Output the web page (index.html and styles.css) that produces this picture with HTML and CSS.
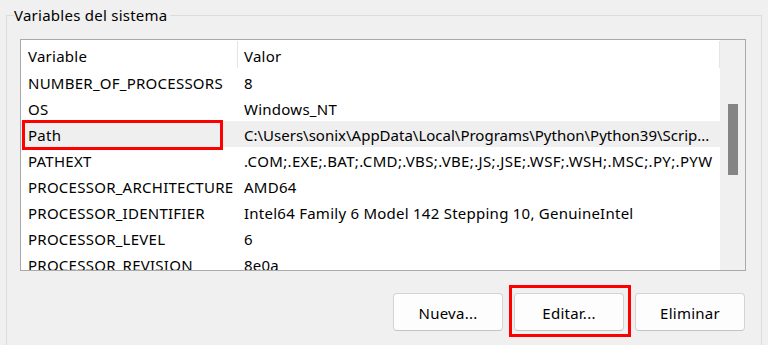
FILE: index.html
```html
<!DOCTYPE html>
<html lang="es">
<head>
<meta charset="utf-8">
<title>Variables del sistema</title>
<link rel="stylesheet" href="styles.css">
</head>
<body>
<fieldset class="group">
  <legend class="group-title">Variables del sistema</legend>
  <div class="listview">
    <div class="list-body">
      <div class="row header">
        <div class="cell c1">Variable</div>
        <div class="cell c2 hdr2">Valor</div>
      </div>
      <div class="row"><div class="cell c1">NUMBER_OF_PROCESSORS</div><div class="cell c2">8</div></div>
      <div class="row"><div class="cell c1">OS</div><div class="cell c2">Windows_NT</div></div>
      <div class="row selected"><div class="cell c1">Path</div><div class="cell c2 tight">C:\Users\sonix\AppData\Local\Programs\Python\Python39\Scrip...</div><span class="mark mark-path"></span></div>
      <div class="row"><div class="cell c1">PATHEXT</div><div class="cell c2 wide">.COM;.EXE;.BAT;.CMD;.VBS;.VBE;.JS;.JSE;.WSF;.WSH;.MSC;.PY;.PYW</div></div>
      <div class="row"><div class="cell c1">PROCESSOR_ARCHITECTURE</div><div class="cell c2">AMD64</div></div>
      <div class="row"><div class="cell c1">PROCESSOR_IDENTIFIER</div><div class="cell c2">Intel64 Family 6 Model 142 Stepping 10, GenuineIntel</div></div>
      <div class="row"><div class="cell c1">PROCESSOR_LEVEL</div><div class="cell c2">6</div></div>
      <div class="row"><div class="cell c1">PROCESSOR_REVISION</div><div class="cell c2">8e0a</div></div>
    </div>
    <div class="scrollbar"><div class="thumb"></div></div>
  </div>
  <div class="buttons">
    <button class="btn">Nueva...</button>
    <button class="btn">Editar...<span class="mark mark-btn"></span></button>
    <button class="btn">Eliminar</button>
  </div>
</fieldset>
</body>
</html>
```

FILE: styles.css
```css
html, body {
  margin: 0;
  padding: 0;
  overflow: hidden;
  background: #f0f0f0;
}
body {
  font-family: "Noto Sans", "Open Sans", sans-serif;
  font-size: 15px;
  letter-spacing: 0.25px;
  color: #000;
  height: 345px;
}
.group {
  margin: 5px 0 0 6px;
  width: 756px;
  height: 341px;
  box-sizing: border-box;
  border: 1px solid #dcdcdc;
  padding: 14px 15px 0 13px;
}
.group-title {
  padding: 0 2px 0 0;
  margin-left: -6px;
  line-height: 20px;
}
.listview {
  display: flex;
  width: 726px;
  height: 232px;
  box-sizing: border-box;
  border: 1px solid #a9a9a9;
  background: #fff;
  overflow: hidden;
}
.list-body {
  flex: 1;
  min-width: 0;
  overflow: hidden;
}
.row {
  position: relative;
  display: flex;
  height: 26px;
  align-items: center;
  white-space: nowrap;
}
.row.header {
  height: 29px;
}
.row.selected {
  background: #efefef;
}
.cell {
  overflow: hidden;
  box-sizing: border-box;
  padding-top: 2px;
}
.c1 {
  width: 216px;
  flex: none;
  padding-left: 7px;
}
.c2 {
  flex: 1;
  padding-left: 7px;
  min-width: 0;
}
.c2.tight {
  letter-spacing: 0;
}
.c2.wide {
  letter-spacing: 0.35px;
}
.hdr2 {
  align-self: stretch;
  display: flex;
  align-items: center;
  border-left: 1px solid #e5e5e5;
  border-right: 1px solid #e5e5e5;
  padding-left: 6px;
  margin: 1px 0;
}
.scrollbar {
  width: 25px;
  flex: none;
  background: #f0f0f0;
  padding-top: 64px;
  box-sizing: border-box;
}
.thumb {
  width: 10px;
  height: 71px;
  margin-left: 8px;
  background: #858585;
}
.buttons {
  display: flex;
  justify-content: flex-end;
  gap: 11px;
  width: 725px;
  margin-top: 22px;
}
.btn {
  position: relative;
  width: 110px;
  height: 38px;
  box-sizing: border-box;
  background: #fdfdfd;
  border: 1px solid #d3d3d3;
  border-bottom-color: #c4c4c4;
  border-radius: 4px;
  font-family: inherit;
  font-size: 15px;
  letter-spacing: 0.25px;
  color: #000;
  padding: 2px 0 0;
}
.mark {
  position: absolute;
  border: 3px solid #ff0000;
  box-sizing: border-box;
  pointer-events: none;
}
.mark-path {
  left: 1px;
  top: -1px;
  width: 201px;
  height: 30px;
}
.mark-btn {
  left: -6px;
  top: -9px;
  width: 122px;
  height: 52px;
}
```
